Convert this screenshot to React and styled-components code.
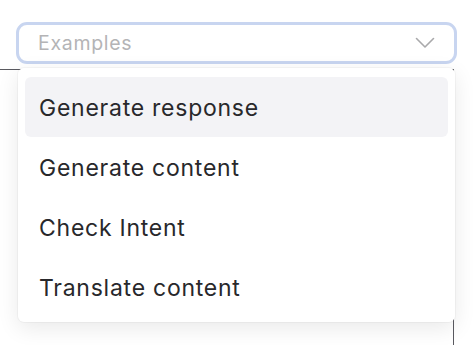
import { createGlobalStyle, styled } from "styled-components";

const items = ["Generate response", "Generate content", "Check Intent", "Translate content"];

export default function App() {
  return (
    <>
      <GlobalStyle />
      <StyledPage>
        <StyledSelect>
          <StyledPlaceholder>Examples</StyledPlaceholder>
          <svg width="20" height="12" viewBox="0 0 20 12" fill="none">
            <path d="M1.5 1.5 L10 10 L18.5 1.5" stroke="#a9a9ab" strokeWidth="1.6" strokeLinecap="round" strokeLinejoin="round" />
          </svg>
        </StyledSelect>
        {/* the editor box sits under the open menu, only its edges show */}
        <StyledEditor />
        <StyledMenu>
          {items.map((label, i) => (
            <StyledItem key={label} active={i === 0}>
              {label}
            </StyledItem>
          ))}
        </StyledMenu>
      </StyledPage>
    </>
  );
}

const GlobalStyle = createGlobalStyle`
  html, body {
    margin: 0;
    background: #ffffff;
    font-family: Inter, "Noto Sans", sans-serif;
  }
`;

const StyledPage = styled.div`
  position: relative;
  width: 474px;
  height: 345px;
  overflow: hidden;
  padding-top: 22px;
  box-sizing: border-box;
`;

const StyledSelect = styled.div`
  margin-left: 16px;
  width: 441px;
  height: 42px;
  box-sizing: border-box;
  border: 3px solid #c8d5f0;
  border-radius: 11px;
  display: flex;
  align-items: center;
  justify-content: space-between;
  padding: 0 19px 0 19px;
  background: #ffffff;
`;

const StyledPlaceholder = styled.span`
  font-size: 19.5px;
  color: #b4b4b6;
  letter-spacing: 0.7px;
`;

const StyledEditor = styled.div`
  margin-top: 5px;
  width: 454px;
  height: 300px;
  box-sizing: border-box;
  border-top: 1.5px solid #5a5a60;
  border-right: 1.5px solid #5a5a60;
`;

const StyledMenu = styled.div`
  position: absolute;
  top: 68px;
  left: 18px;
  width: 437px;
  height: 254px;
  box-sizing: border-box;
  padding: 9px 7px 7px;
  background: #ffffff;
  border-radius: 6px;
  box-shadow: 0 0 0 1px rgba(0, 0, 0, 0.03), 0 6px 22px rgba(0, 0, 0, 0.09);
  display: flex;
  flex-direction: column;
`;

const StyledItem = styled.div`
  height: 60px;
  flex-shrink: 0;
  display: flex;
  align-items: center;
  padding: 2px 0 0 14px;
  box-sizing: border-box;
  border-radius: 6px;
  font-size: 23px;
  color: #28282b;
  letter-spacing: 0.75px;
  background: ${({ active }) => (active ? "#f3f3f6" : "transparent")};
`;
